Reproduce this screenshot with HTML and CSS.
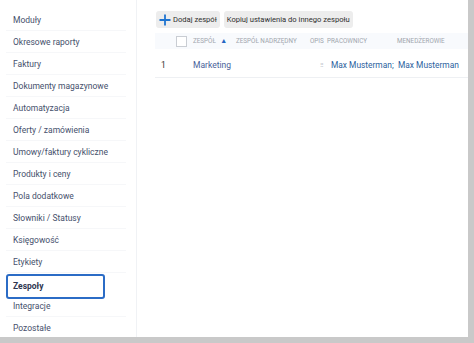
FILE: index.html
```html
<!DOCTYPE html>
<html lang="pl">
<head>
<meta charset="utf-8">
<title>Zespoły</title>
<link rel="stylesheet" href="styles.css">
</head>
<body>
<div class="frame">
  <nav class="sidebar">
    <div class="item">Moduły</div>
    <div class="item">Okresowe raporty</div>
    <div class="item">Faktury</div>
    <div class="item">Dokumenty magazynowe</div>
    <div class="item">Automatyzacja</div>
    <div class="item">Oferty / zamówienia</div>
    <div class="item">Umowy/faktury cykliczne</div>
    <div class="item">Produkty i ceny</div>
    <div class="item">Pola dodatkowe</div>
    <div class="item">Słowniki / Statusy</div>
    <div class="item">Księgowość</div>
    <div class="item">Etykiety</div>
    <div class="item selected">Zespoły</div>
    <div class="item">Integracje</div>
    <div class="item">Pozostałe</div>
  </nav>
  <main class="main">
    <div class="toolbar">
      <button class="btn"><svg class="plus" viewBox="0 0 12 12" width="12" height="12"><path d="M6 0.5V11.5M0.5 6H11.5" stroke="#1f74d0" stroke-width="1.8"/></svg>Dodaj zespół</button>
      <button class="btn">Kopiuj ustawienia do innego zespołu</button>
    </div>
    <div class="table">
      <div class="head">
        <div></div>
        <div><span class="check"></span></div>
        <div>ZESPÓŁ <span class="sort">▲</span></div>
        <div>ZESPÓŁ NADRZĘDNY</div>
        <div>OPIS</div>
        <div>PRACOWNICY</div>
        <div>MENEDŻEROWIE</div>
      </div>
      <div class="row">
        <div class="num">1</div>
        <div></div>
        <div class="link">Marketing</div>
        <div></div>
        <div class="grip">⠿</div>
        <div class="link">Max Musterman;</div>
        <div class="link">Max Musterman</div>
      </div>
    </div>
  </main>
</div>
</body>
</html>
```
FILE: styles.css
```css
* { box-sizing: border-box; }
html, body { margin: 0; padding: 0; background: #fff; }
body { font-family: Roboto, "Liberation Sans", sans-serif; }

.frame {
  width: 474px;
  height: 343px;
  display: flex;
  background: #fff;
  border-right: 6px solid #c9c9c9;
  border-bottom: 6px solid #c9c9c9;
  overflow: hidden;
}

.sidebar {
  width: 137px;
  flex: none;
  padding-top: 9px;
  border-right: 1px solid #f0f2f5;
}

.item {
  height: 22px;
  margin-left: 6px;
  width: 120px;
  padding-left: 7px;
  font-size: 8.5px;
  line-height: 22px;
  color: #46506c;
  border-bottom: 1px solid #f6f7f9;
  white-space: nowrap;
}

.item.selected {
  width: 99px;
  height: 25px;
  margin-top: 1px;
  margin-bottom: -4px;
  padding-left: 5px;
  line-height: 21px;
  border: 2px solid #2b6cc6;
  border-radius: 3px;
  font-weight: 700;
  color: #2e3650;
}

.main {
  flex: 1;
  padding: 11px 0 0 18px;
}

.toolbar {
  display: flex;
  gap: 4px;
  height: 17px;
  margin-left: 1px;
}

.btn {
  display: flex;
  align-items: center;
  gap: 2px;
  height: 17px;
  padding: 0 3px;
  border: none;
  border-radius: 3px;
  background: #ededed;
  font-family: Roboto, "Liberation Sans", sans-serif;
  font-size: 7.6px;
  color: #2f2f2f;
  white-space: nowrap;
}
.plus { flex: none; }

.table { margin-top: 5px; }

.head, .row {
  display: grid;
  grid-template-columns: 21px 17px 43px 74px 15px 72px 1fr;
  align-items: center;
}

.head {
  height: 16px;
  background: #f8fafd;
  font-size: 6.3px;
  color: #a1a6ad;
  white-space: nowrap;
}
.head > div:nth-child(6) { padding-left: 2px; }

.check {
  display: block;
  width: 11px;
  height: 11px;
  border: 1px solid #c9cdd3;
  background: #fff;
}
.sort { color: #2566c2; font-size: 7px; margin-left: 3px; }

.row {
  height: 29px;
  padding-top: 3px;
  border-bottom: 1px solid #eef0f3;
  font-size: 8.4px;
  white-space: nowrap;
}
.num { padding-left: 6px; font-size: 8.5px; color: #333; }
.link { color: #2c5f9e; }
.row > .link:nth-child(3) { color: #4a5f9a; font-size: 8.5px; }
.grip { text-align: right; padding-right: 1px; font-size: 5px; color: #b0b4ba; }
.row > .link:nth-child(6) { padding-left: 6px; }
.row > .link:nth-child(7) { padding-left: 1px; }
```
